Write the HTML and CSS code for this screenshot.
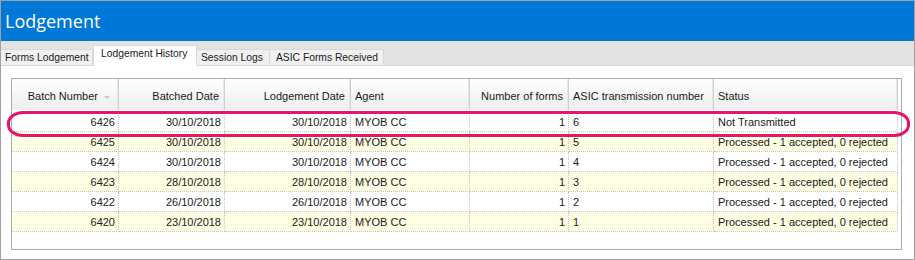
FILE: index.html
```html
<!DOCTYPE html>
<html>
<head>
<meta charset="utf-8">
<link rel="stylesheet" href="styles.css">
</head>
<body>
<div class="window">
  <div class="titlebar">Lodgement</div>
  <div class="tabstrip">
    <div class="tab t1">Forms Lodgement</div>
    <div class="tab active t2">Lodgement History</div>
    <div class="tab t3">Session Logs</div>
    <div class="tab t4">ASIC Forms Received</div>
  </div>
  <div class="content">
    <div class="grid">
      <div class="row head">
        <div class="hc r sortcol">Batch Number<span class="sort"></span></div>
        <div class="hc r">Batched Date</div>
        <div class="hc r">Lodgement Date</div>
        <div class="hc">Agent</div>
        <div class="hc r">Number of forms</div>
        <div class="hc">ASIC transmission number</div>
        <div class="hc">Status</div>
      </div>
      <div class="row">
        <div class="c r">6426</div><div class="c r">30/10/2018</div><div class="c r">30/10/2018</div><div class="c">MYOB CC</div><div class="c r">1</div><div class="c">6</div><div class="c">Not Transmitted</div>
      </div>
      <div class="row alt">
        <div class="c r">6425</div><div class="c r">30/10/2018</div><div class="c r">30/10/2018</div><div class="c">MYOB CC</div><div class="c r">1</div><div class="c">5</div><div class="c">Processed - 1 accepted, 0 rejected</div>
      </div>
      <div class="row">
        <div class="c r">6424</div><div class="c r">30/10/2018</div><div class="c r">30/10/2018</div><div class="c">MYOB CC</div><div class="c r">1</div><div class="c">4</div><div class="c">Processed - 1 accepted, 0 rejected</div>
      </div>
      <div class="row alt">
        <div class="c r">6423</div><div class="c r">28/10/2018</div><div class="c r">28/10/2018</div><div class="c">MYOB CC</div><div class="c r">1</div><div class="c">3</div><div class="c">Processed - 1 accepted, 0 rejected</div>
      </div>
      <div class="row">
        <div class="c r">6422</div><div class="c r">26/10/2018</div><div class="c r">26/10/2018</div><div class="c">MYOB CC</div><div class="c r">1</div><div class="c">2</div><div class="c">Processed - 1 accepted, 0 rejected</div>
      </div>
      <div class="row alt">
        <div class="c r">6420</div><div class="c r">23/10/2018</div><div class="c r">23/10/2018</div><div class="c">MYOB CC</div><div class="c r">1</div><div class="c">1</div><div class="c">Processed - 1 accepted, 0 rejected</div>
      </div>
    </div>
  </div>
  <div class="highlight"></div>
</div>
</body>
</html>
```
FILE: styles.css
```css
* { box-sizing: border-box; }
html, body { margin: 0; padding: 0; background: #fff; }
.window {
  position: relative;
  width: 915px;
  height: 260px;
  border: 1px solid #a0a0a0;
  display: flex;
  flex-direction: column;
  font-family: "Liberation Sans", Arial, sans-serif;
  font-size: 11px;
  color: #1a1a1a;
}
.titlebar {
  height: 40px;
  background: #0078d7;
  color: #fff;
  font-family: "Open Sans", "Noto Sans", sans-serif;
  font-size: 18px;
  line-height: 40px;
  padding-left: 4px;
  padding-top: 0;
}
.tabstrip {
  height: 25px;
  background: #e3e3e3;
  border-bottom: 1px solid #d9d9d9;
  display: flex;
  align-items: flex-end;
}
.tab {
  height: 16px;
  background: #f0f0f0;
  border: 1px solid #d9d9d9;
  border-bottom: none;
  line-height: 15px;
  font-size: 10.3px;
  padding: 0 0 0 4px;
  color: #1a1a1a;
  white-space: nowrap;
  overflow: visible;
}
.tab.t1 { width: 92px; border-left: none; }
.tab.t2 { width: 104px; }
.tab.t3 { width: 73px; border-left: none; padding-left: 4px; }
.tab.t4 { width: 114px; border-left: none; padding-left: 6px; }
.tab.active {
  height: 21px;
  background: #fff;
  margin-bottom: -1px;
  line-height: 16px;
  padding-left: 7px;
  position: relative;
}
.content {
  flex: 1;
  background: #fff;
  padding: 12px 0 9px 10px;
}
.grid {
  width: 891px;
  height: 172px;
  border: 1px solid #ababab;
}
.row {
  display: grid;
  grid-template-columns: 107px 106px 126px 119px 99px 145px 184px;
  height: 20px;
}
.row.head {
  height: 33px;
}
.hc {
  background: linear-gradient(#ffffff, #f4f4f4 60%, #eeeeef);
  height: 31px;
  line-height: 31px;
  padding: 2px 5px 0 4px;
  border-right: 1px solid #d0d0d0;
  box-shadow: inset -1px 0 0 #e8e8e8;
  white-space: nowrap;
  position: relative;
}
.hc.r { text-align: right; padding-right: 5px; }
.hc.sortcol { padding-right: 20px; }
.sort {
  position: absolute;
  right: 8px;
  top: 17px;
  width: 0; height: 0;
  border-left: 3px solid transparent;
  border-right: 3px solid transparent;
  border-top: 3px solid #c8c8c8;
}
.c {
  height: 20px;
  line-height: 20px;
  border-right: 1px dotted #c4c4c4;
  border-bottom: 1px dotted #c4c4c4;
  padding: 0 3px 0 4px;
  white-space: nowrap;
  overflow: hidden;
}
.c.r { text-align: right; padding-right: 3px; }
.row.alt .c { background: #fefee3; }
.highlight {
  position: absolute;
  left: 6px;
  top: 110px;
  width: 903px;
  height: 26px;
  border: 3px solid #e3166f;
  border-radius: 16px / 12px;
}
```
